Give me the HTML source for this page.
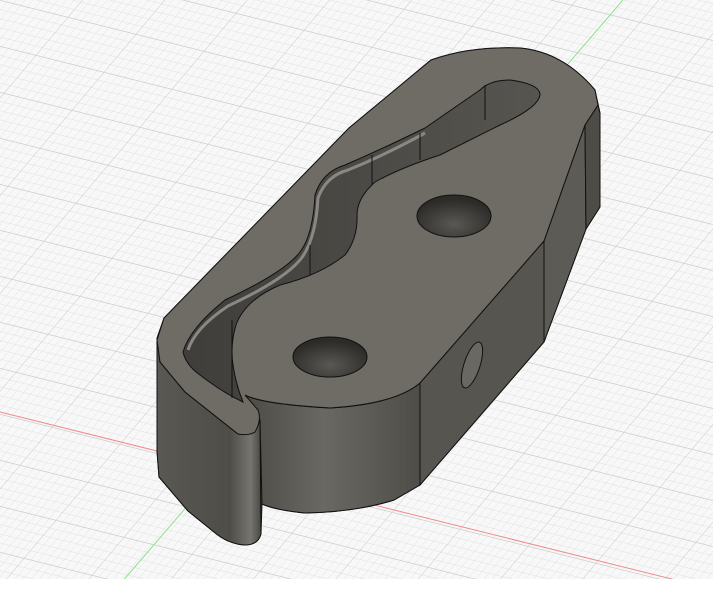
<!DOCTYPE html>
<html><head><style>
html,body{margin:0;padding:0;background:#fff;}
svg{display:block;}
</style></head><body>
<svg width="724" height="596" viewBox="0 0 724 596" xmlns="http://www.w3.org/2000/svg">
<defs>
<pattern id="g1" width="10" height="10" patternUnits="userSpaceOnUse" patternTransform="matrix(0.68 0.17 -0.64 0.76 0 0)">
<path d="M0 0H10M0 0V10" stroke="#dedede" stroke-width="1.1" fill="none"/>
</pattern>
<pattern id="g2" width="100" height="50" patternUnits="userSpaceOnUse" patternTransform="matrix(0.68 0.17 -0.64 0.76 0 0)">
<path d="M0 0H100M0 0V50" stroke="#c4c4c4" stroke-width="1.2" fill="none"/>
</pattern>
<linearGradient id="front" x1="0" x2="1" y1="0" y2="0">
<stop offset="0" stop-color="#4d4b46"/><stop offset="0.45" stop-color="#6a6862"/><stop offset="1" stop-color="#4f4d48"/>
</linearGradient>
<linearGradient id="hook" x1="0" x2="1" y1="0" y2="0">
<stop offset="0" stop-color="#5a5853"/><stop offset="0.7" stop-color="#4f4d48"/><stop offset="0.9" stop-color="#77756f"/><stop offset="1" stop-color="#4a4843"/>
</linearGradient>
<radialGradient id="hole" cx="0.5" cy="0.7" r="0.6">
<stop offset="0" stop-color="#5a5853"/><stop offset="1" stop-color="#2c2b28"/>
</radialGradient>
<linearGradient id="slot" x1="0" x2="1" y1="0" y2="0">
<stop offset="0" stop-color="#3f3e3a"/><stop offset="1" stop-color="#575550"/>
</linearGradient>
</defs>
<rect width="724" height="596" fill="#f8f8f8"/>
<rect width="724" height="596" fill="url(#g1)"/>
<rect width="724" height="596" fill="url(#g2)"/>
<line x1="0" y1="412" x2="724" y2="592" stroke="#f08a8a" stroke-width="1"/>
<line x1="623" y1="0" x2="115" y2="590" stroke="#8ee08e" stroke-width="1"/>
<rect x="0" y="579" width="724" height="17" fill="#fff"/>
<rect x="713" y="0" width="11" height="596" fill="#fff"/>

<path d="M157 338 L164 318 L349 128 L431 60 Q470 46 520 48 Q563 52 595 90 L600 113 L600 207 L586 229 L544 342 L420 485 L394 500 Q356 512 305 513 Q275 510 262 504 L261 534 Q258 545 245 545 Q228 544 214 532 L188 511 L159 477 L157 451 Z" fill="#55534e" stroke="#111" stroke-width="1"/>
<path d="M157 338 L157 451 L159 477 L188 511 L214 532 Q228 544 245 545 Q258 545 261 534 L260 420 Q255 436 238 434 L185 392 L160 362 Z" fill="url(#hook)" stroke="#111" stroke-width="1"/>
<path d="M245 395 Q262 404 330 408 Q395 404 420 383 L420 485 L394 500 Q356 512 305 513 Q275 510 262 504 L260 420 Z" fill="url(#front)" stroke="#111" stroke-width="1"/>
<path d="M420 383 L544 241 L544 342 L420 485 Z" fill="#57554f" stroke="#111" stroke-width="1"/>
<path d="M544 241 L585 125 L586 229 L544 342 Z" fill="#5d5b55" stroke="#111" stroke-width="1"/>
<path d="M585 125 L598 105 L600 113 L600 207 L586 229 Z" fill="#4e4c47" stroke="#111" stroke-width="1"/>
<path d="M157 340 L164 318 L349 128 L431 60 Q470 46 520 48 Q563 52 595 90 L598 105 L585 125 L544 241 L420 383 Q395 404 330 408 Q262 404 245 395 L258 410 Q262 420 255 432 Q248 436 238 434 L185 392 L160 362 Z" fill="#6e6c65" stroke="#111" stroke-width="1"/>
<path d="M183 352 Q190 328 225 300 Q285 272 300 252 Q313 235 315 195 Q322 172 345 165 Q380 150 425 128 L480 90 Q490 80 510 80 Q540 84 540 95 Q538 108 500 125 L440 155 Q400 168 375 182 Q357 198 357 215 Q358 238 345 255 Q320 275 280 285 Q245 300 236 325 Q230 345 233 365 Q236 385 243 402 Q222 392 200 375 Q186 365 183 352 Z" fill="url(#slot)" stroke="#111" stroke-width="1"/>
<path d="M188 350 Q195 328 228 306 Q288 278 303 256 Q316 236 318 198 Q326 176 348 170 Q385 155 425 133" fill="none" stroke="#8a8882" stroke-width="3"/>
<path d="M232 320 L232 398 M310 245 L310 275 M372 155 L372 185 M420 133 L420 160 M485 85 L485 120" stroke="#111" stroke-width="1" fill="none"/>
<ellipse cx="454" cy="216" rx="37" ry="21" fill="url(#hole)" stroke="#111" stroke-width="1"/>
<ellipse cx="330" cy="357" rx="37" ry="20" fill="url(#hole)" stroke="#111" stroke-width="1"/>
<ellipse cx="472" cy="365" rx="8" ry="24" transform="rotate(18 472 365)" fill="#6a6862" stroke="#111" stroke-width="1"/>
</svg>
</body></html>
